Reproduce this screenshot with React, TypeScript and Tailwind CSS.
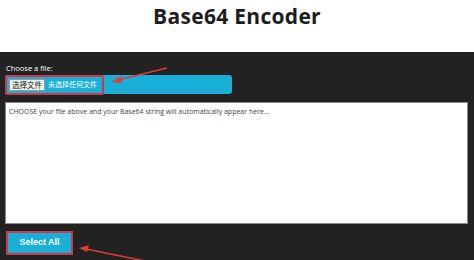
const App = () => {
  return (
    <div className="relative w-[474px] h-[260px] overflow-hidden bg-white font-['Open_Sans',sans-serif]">
      {/* Heading */}
      <div className="h-[52px] flex justify-center">
        <h1 className="text-[21px] leading-[32px] font-bold text-[#1c1c1c] tracking-[0.3px]">
          Base64 Encoder
        </h1>
      </div>

      {/* Body */}
      <div className="h-[208px] bg-[#222222] px-[5px] pt-[11px]">
        <p className="text-[7.5px] text-white leading-[10px] pl-[1px]">
          Choose a file:
        </p>
        <div className="mt-[2px] w-[227px] h-[19px] bg-[#1aafd6] rounded-[3px] flex items-center">
          <div className="h-[20px] w-[99px] border-2 border-[#d0384a] rounded-[2px] flex items-center pl-[2px] gap-[3px] font-['Noto_Sans_CJK_SC',sans-serif]">
            <span className="bg-[#efefef] text-[#222] text-[7.5px] leading-[10px] px-[2px] border border-[#999] rounded-[1px]">
              选择文件
            </span>
            <span className="text-white text-[7px]">未选择任何文件</span>
          </div>
        </div>
        <div className="mt-[8px] w-[463px] h-[122px] bg-white border border-[#8a8a8a] px-[3px] py-[4px]">
          <p className="text-[7px] text-[#444] leading-[10px]">
            CHOOSE your file above and your Base64 string will automatically
            appear here...
          </p>
        </div>
        <button className="mt-[7px] ml-[1px] w-[67px] h-[24px] bg-[#1aafd6] border-2 border-[#d0384a] text-white text-[9px] font-bold font-['Liberation_Sans',sans-serif]">
          Select All
        </button>
      </div>

      {/* Annotation arrows */}
      <svg
        className="absolute left-0 top-0 pointer-events-none"
        width="474"
        height="260"
      >
        <line x1="167" y1="68" x2="118" y2="80" stroke="#e03a3a" strokeWidth="1.5" />
        <polygon points="111,82 121,76 122,83" fill="#e03a3a" />
        <line x1="150" y1="262" x2="86" y2="249" stroke="#e03a3a" strokeWidth="1.5" />
        <polygon points="79,248 89,245 87,252" fill="#e03a3a" />
      </svg>
    </div>
  );
};

export default App;
